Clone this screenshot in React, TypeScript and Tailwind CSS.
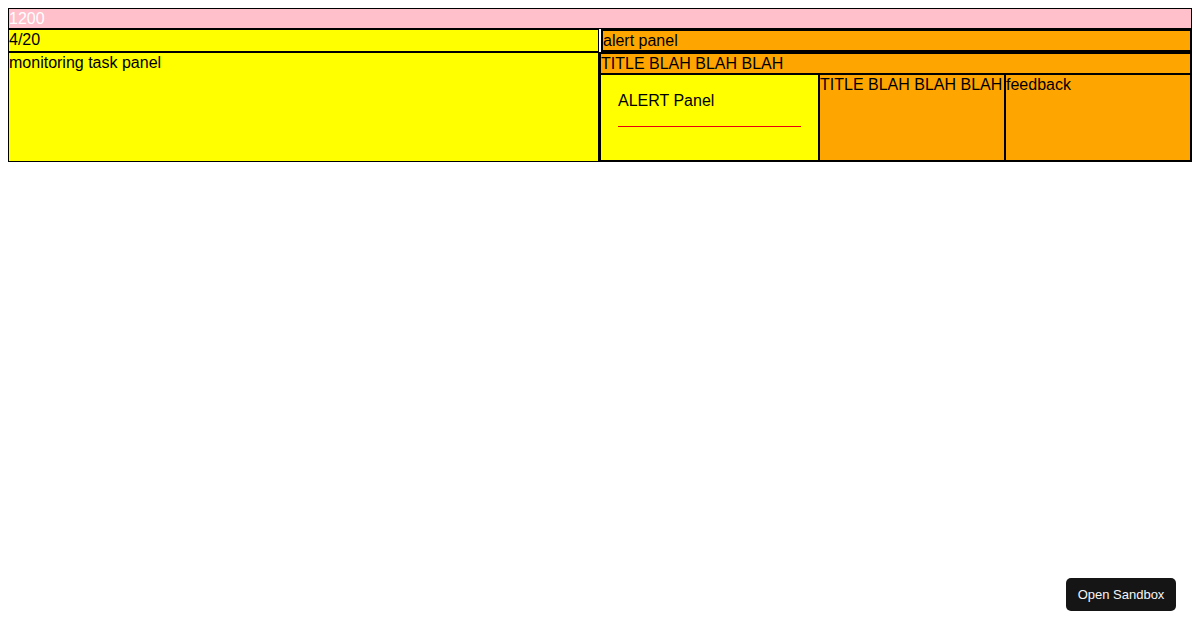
export default function App() {
  return (
    <div className="min-h-[630px] bg-white p-2 font-['Liberation_Sans',Arial,sans-serif] text-[16px] leading-[20px] text-black">
      <div className="h-[21px] w-[1184px] border border-black bg-[#ffc0cb] leading-[19px] text-white">1200</div>

      <div className="flex w-[1184px]">
        {/* left column */}
        <div className="flex w-[591px] flex-col">
          <div className="h-[23px] border border-black bg-[#ffff00]">4/20</div>
          <div className="h-[110px] border border-black bg-[#ffff00]">monitoring task panel</div>
        </div>

        {/* right column */}
        <div className="flex w-[593px] flex-col">
          <div className="ml-[2px] h-[23px] border-2 border-black bg-[#ffa500] leading-[20px]">alert panel</div>
          <div className="flex h-[110px] flex-col border-2 border-black bg-[#ffa500]">
            <div className="h-[21px] border-b-2 border-black leading-[20px]">TITLE BLAH BLAH BLAH</div>
            <div className="flex flex-1 leading-[18px]">
              <div className="w-[219px] border-r-2 border-black bg-[#ffff00] px-[17px] pt-[17px]">
                <div className="h-[18px]">ALERT Panel</div>
                <div className="mt-[16px] w-[183px] border-t border-solid border-red-600" />
              </div>
              <div className="w-[186px] border-r-2 border-black pt-[1px]">TITLE BLAH BLAH BLAH</div>
              <div className="flex-1 pt-[1px]">feedback</div>
            </div>
          </div>
        </div>
      </div>

      <button className="fixed bottom-[19px] right-[24px] h-[33px] w-[110px] rounded-[5px] bg-[#151515] font-['Liberation_Sans',Arial,sans-serif] text-[13px] text-[#f5f5f5]">
        Open Sandbox
      </button>
    </div>
  )
}
